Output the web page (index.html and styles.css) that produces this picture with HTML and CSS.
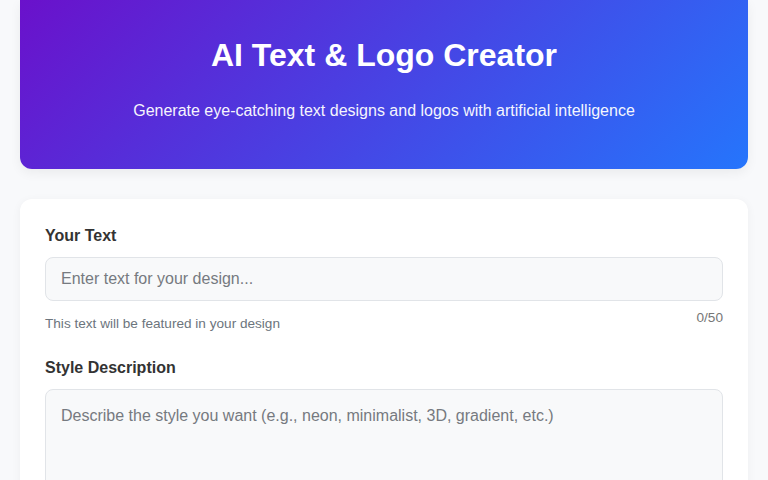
FILE: index.html
```html
<!DOCTYPE html>
<html lang="en">
<head>
    <meta charset="UTF-8">
    <meta name="viewport" content="width=device-width, initial-scale=1.0">
    <title>AI Text &amp; Logo Creator</title>
    <link rel="stylesheet" href="styles.css">
</head>
<body>
    <div class="container">
        <header class="hero">
            <h1>AI Text &amp; Logo Creator</h1>
            <p>Generate eye-catching text designs and logos with artificial intelligence</p>
        </header>

        <div class="card">
            <div class="form-group">
                <label for="designText">Your Text</label>
                <input type="text" id="designText" maxlength="50" placeholder="Enter text for your design...">
                <div class="field-meta">
                    <span class="hint">This text will be featured in your design</span>
                    <span class="counter" id="charCount">0/50</span>
                </div>
            </div>

            <div class="form-group">
                <label for="styleDesc">Style Description</label>
                <textarea id="styleDesc" rows="5" placeholder="Describe the style you want (e.g., neon, minimalist, 3D, gradient, etc.)"></textarea>
            </div>
        </div>
    </div>

    <script>
        const textInput = document.getElementById('designText');
        textInput.addEventListener('input', function () {
            document.getElementById('charCount').innerText = textInput.value.length + '/50';
        });
    </script>
</body>
</html>
```

FILE: styles.css
```css
* {
    box-sizing: border-box;
}
body {
    margin: 0;
    font-family: "Liberation Sans", Arial, sans-serif;
    background-color: #f8f9fb;
    color: #333;
}
.container {
    padding: 0 20px 20px;
}
.hero {
    background: linear-gradient(135deg, #6a11cb 0%, #2575fc 100%);
    color: white;
    text-align: center;
    padding: 37px 20px 49px;
    border-radius: 0 0 12px 12px;
    box-shadow: 0 4px 12px rgba(0, 0, 0, 0.06);
    margin-bottom: 30px;
}
.hero h1 {
    margin: 0 0 28px;
    font-size: 32px;
    line-height: 37px;
}
.hero p {
    margin: 0;
    font-size: 16px;
    line-height: 18px;
    opacity: 0.95;
}
.card {
    background: white;
    border-radius: 12px;
    padding: 25px;
    box-shadow: 0 2px 10px rgba(0, 0, 0, 0.05);
}
.form-group {
    margin-bottom: 25px;
}
label {
    display: block;
    font-weight: bold;
    font-size: 16px;
    line-height: 24px;
    margin-bottom: 9px;
}
input[type="text"], textarea {
    width: 100%;
    padding: 12px 15px;
    font-family: inherit;
    font-size: 16px;
    line-height: 18px;
    color: #333;
    background-color: #f8f9fa;
    border: 1px solid #e1e4e8;
    border-radius: 8px;
    outline: none;
}
input[type="text"] {
    height: 44px;
}
textarea {
    padding-top: 16px;
    line-height: 20px;
    height: 130px;
    resize: vertical;
}
input::placeholder, textarea::placeholder {
    color: #767a80;
}
.field-meta {
    display: flex;
    justify-content: space-between;
    font-size: 13.6px;
    color: #6c757d;
}
.hint {
    margin-top: 15px;
}
.counter {
    margin-top: 9px;
    color: #777;
}
```
